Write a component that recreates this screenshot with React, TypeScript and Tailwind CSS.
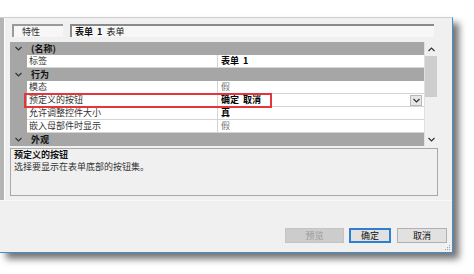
import React from "react";

const font = "font-['Noto_Sans_CJK_SC','Noto_Sans',sans-serif]";

function ChevDown({ className = "" }: { className?: string }) {
  return (
    <svg width="7" height="5" viewBox="0 0 7 5" className={className}>
      <path d="M0.5 1 L3.5 4 L6.5 1" fill="none" stroke="#333" strokeWidth="1.2" />
    </svg>
  );
}
function ChevUp({ className = "" }: { className?: string }) {
  return (
    <svg width="7" height="5" viewBox="0 0 7 5" className={className}>
      <path d="M0.5 4 L3.5 1 L6.5 4" fill="none" stroke="#333" strokeWidth="1.2" />
    </svg>
  );
}

function Category({ label }: { label: string }) {
  return (
    <div className="flex h-[13px] bg-[#a6a6a6] items-center shrink-0">
      <div className="w-[17px] flex justify-center">
        <ChevDown />
      </div>
      <span className="pl-[4px] text-[9px] leading-[13px] font-bold text-[#111]">{label}</span>
    </div>
  );
}

function Prop({
  name,
  value,
  bold,
  dropdown,
}: {
  name: string;
  value: string;
  bold?: boolean;
  dropdown?: boolean;
}) {
  return (
    <div className="flex h-[13px] shrink-0">
      <div className="w-[17px] bg-[#a6a6a6]" />
      <div className="w-[191px] bg-white border-b border-r border-[#d4d4d4] pl-[2px] text-[9px] leading-[12px] text-[#333] whitespace-nowrap">
        {name}
      </div>
      <div className="flex-1 bg-white border-b border-[#d4d4d4] pl-[3px] flex items-center justify-between pr-[2px]">
        <span
          className={
            "text-[9px] leading-[12px] whitespace-pre " +
            (bold ? "font-bold text-[#000]" : "text-[#777]")
          }
        >
          {value}
        </span>
        {dropdown && (
          <div className="w-[12px] h-[11px] bg-[#e6e6e6] border border-[#b8b8b8] flex items-center justify-center">
            <ChevDown />
          </div>
        )}
      </div>
    </div>
  );
}

export default function App() {
  return (
    <div className={"w-[474px] h-[274px] bg-white relative overflow-hidden " + font}>
      <div className="mt-[17px] w-[453px] h-[236px] bg-[#f0f0f0] border-t border-t-[#cfcfcf] border-r border-r-[#3f8fd2] border-b border-b-[#3f8fd2] shadow-[6px_6px_7px_rgba(0,0,0,0.55)] flex flex-col relative">
        <div className="flex h-[182px]">
          <div className="w-[5px] bg-[#b4b4b4] border-r border-white" />
          <div className="pl-[5px] pt-[6px] flex flex-col">
            {/* header */}
            <div className="flex h-[13px] ml-[2px] gap-[7px]">
              <div className="w-[51px] h-[13px] bg-[#f7f7f7] border-t-2 border-l-2 border-[#9a9a9a] pl-[8px] text-[9px] leading-[11px] text-[#333]">
                特性
              </div>
              <div className="w-[364px] h-[13px] bg-[#f7f7f7] border-t-2 border-l-2 border-[#8a8a8a] pl-[3px] text-[9px] leading-[11px] text-[#111] whitespace-nowrap">
                <span className="font-bold">表单 &nbsp;1</span>
                <span> &nbsp;表单</span>
              </div>
            </div>
            {/* grid */}
            <div className="mt-[5px] flex w-[427px] h-[104px] relative">
              <div className="flex flex-col w-[414px]">
                <Category label="(名称)" />
                <Prop name="标签" value="表单  1" bold />
                <Category label="行为" />
                <Prop name="模态" value="假" />
                <Prop name="预定义的按钮" value="确定  取消" bold dropdown />
                <Prop name="允许调整控件大小" value="真" bold />
                <Prop name="嵌入母部件时显示" value="假" />
                <Category label="外观" />
              </div>
              <div className="w-[13px] h-[104px] bg-[#f0f0f0] flex flex-col items-center border-l border-[#e0e0e0]">
                <div className="h-[14px] flex items-center justify-center">
                  <ChevUp />
                </div>
                <div className="w-[12px] h-[41px] bg-[#cdcdcd]" />
                <div className="flex-1" />
                <div className="h-[13px] flex items-center justify-center">
                  <ChevDown />
                </div>
              </div>
              <div className="absolute left-[14px] top-[51px] w-[248px] h-[15px] border-2 border-[#e2363b]" />
            </div>
            {/* description */}
            <div className="mt-[2px] w-[428px] h-[48px] border border-[#a8a8a8] bg-[#f0f0f0] px-[3px] pt-[1px] flex flex-col gap-[2px]">
              <div className="h-[10px] text-[9px] leading-[10px] font-bold text-[#111]">预定义的按钮</div>
              <div className="h-[10px] text-[9px] leading-[10px] text-[#333]">选择要显示在表单底部的按钮集。</div>
            </div>
          </div>
        </div>
        {/* buttons */}
        <div className="flex-1 border-t border-[#f8f8f8] flex justify-end items-start pt-[27px] pr-[5px]">
          <div className="w-[59px] h-[15px] bg-[#cccccc] border border-[#c4c4c4] text-[9px] leading-[13px] text-[#9a9a9a] text-center">
            预览
          </div>
          <div className="ml-[5px] w-[42px] h-[15px] bg-[#e1e1e1] border-2 border-[#2f7fd0] text-[9px] leading-[11px] text-[#111] text-center">
            确定
          </div>
          <div className="ml-[6px] w-[50px] h-[15px] bg-[#e1e1e1] border border-[#b0b0b0] text-[9px] leading-[13px] text-[#111] text-center">
            取消
          </div>
        </div>
        <svg className="absolute right-[1px] bottom-[1px]" width="6" height="6" viewBox="0 0 6 6">
          <rect x="4" y="0" width="1" height="1" fill="#a0a0a0" />
          <rect x="2" y="2" width="1" height="1" fill="#a0a0a0" />
          <rect x="4" y="2" width="1" height="1" fill="#a0a0a0" />
          <rect x="0" y="4" width="1" height="1" fill="#a0a0a0" />
          <rect x="2" y="4" width="1" height="1" fill="#a0a0a0" />
          <rect x="4" y="4" width="1" height="1" fill="#a0a0a0" />
        </svg>
      </div>
    </div>
  );
}
